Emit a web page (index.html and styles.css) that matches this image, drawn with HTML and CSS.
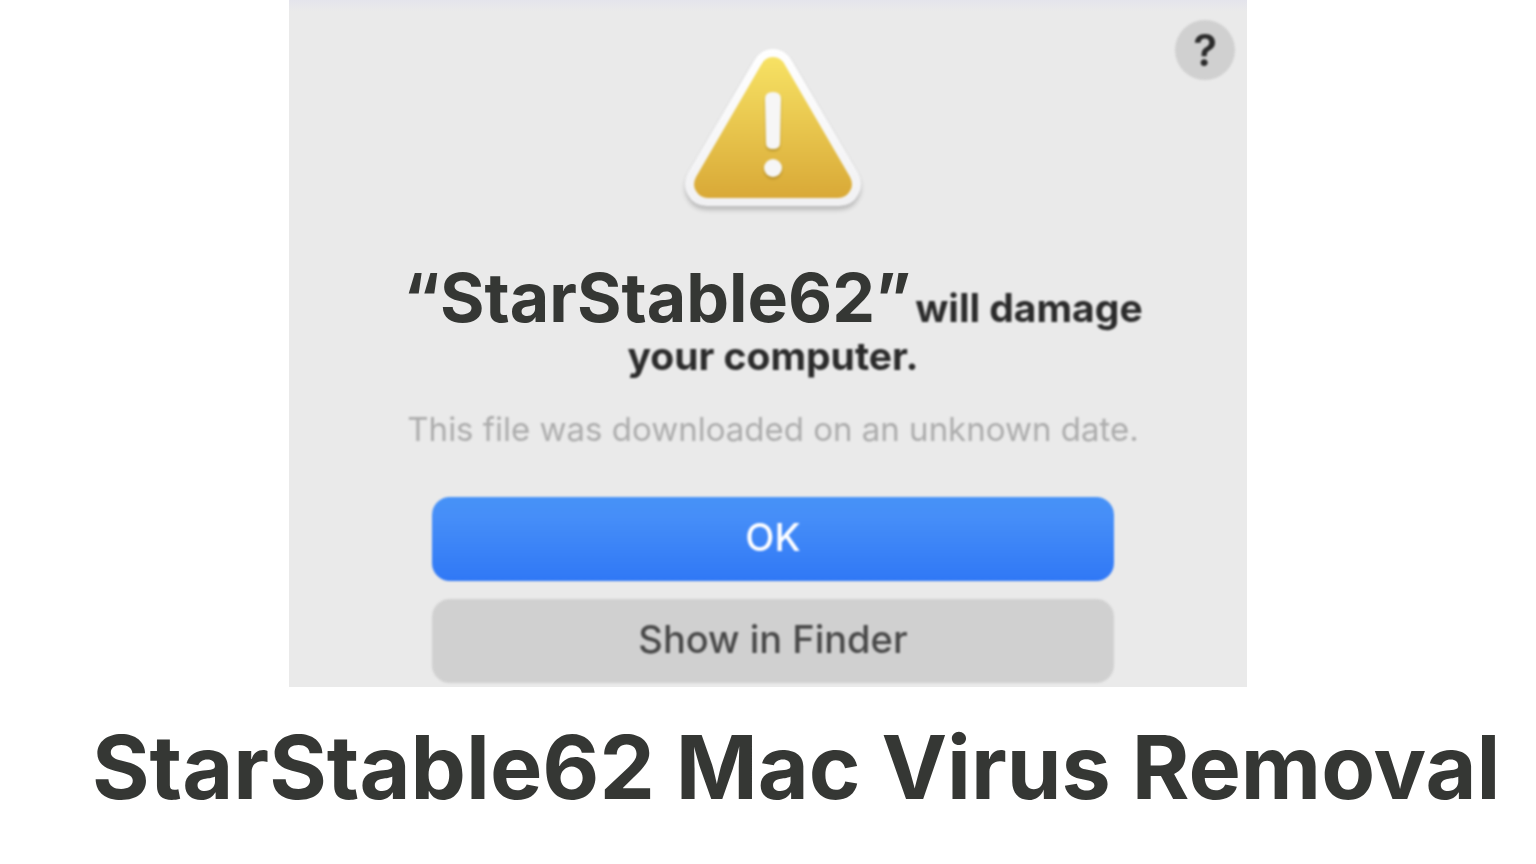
FILE: index.html
```html
<!DOCTYPE html>
<html lang="en">
<head>
  <meta charset="utf-8" />
  <meta name="viewport" content="width=device-width, initial-scale=1" />
  <title>StarStable62 Mac Virus Removal</title>
  <link rel="stylesheet" href="styles.css">
</head>
<body>
  <main class="page">
    <section class="dialog" aria-labelledby="alertTitle">
      <button class="help" type="button" aria-label="Help">?</button>

      <svg class="warning" viewBox="0 0 190 174" width="190" height="174" aria-hidden="true">
        <defs>
          <linearGradient id="gold" x1="0" y1="0" x2="0" y2="1">
            <stop offset="0" stop-color="#f7e264" />
            <stop offset="1" stop-color="#d9a937" />
          </linearGradient>
          <linearGradient id="rim" x1="0" y1="0" x2="0" y2="1">
            <stop offset="0" stop-color="#ffffff" />
            <stop offset="1" stop-color="#f1f1f3" />
          </linearGradient>
        </defs>
        <path class="rim" fill="url(#rim)" d="M76 16 Q83 4 95 4 Q107 4 114 16 L180 128 Q186 140 180 150 Q174 161 161 161 L29 161 Q16 161 10 150 Q4 140 10 128 Z" />
        <path fill="url(#gold)" d="M83 20 Q87 12 95 12 Q103 12 107 20 L172 132 Q176 140 172 146 Q168 153 160 153 L30 153 Q22 153 18 146 Q14 140 18 132 Z" />
        <g class="mark">
          <path d="M87 54 Q87 47 95 47 Q103 47 103 54 L102 98 Q102 104 95 104 Q88 104 88 98 Z" />
          <circle cx="95" cy="123" r="9" />
        </g>
      </svg>

      <h2 class="title" id="alertTitle">
        <span class="row"><span class="name">“StarStable62”</span> <span class="soft">will damage</span></span>
        <span class="row"><span class="soft">your computer.</span></span>
      </h2>
      <p class="info">This file was downloaded on an unknown date.</p>

      <div class="actions">
        <button class="btn primary" type="button">OK</button>
        <button class="btn" type="button">Show in Finder</button>
      </div>
    </section>

    <h1 class="headline">StarStable62 Mac Virus Removal</h1>
  </main>
</body>
</html>
```

FILE: styles.css
```css
:root{
  --panel: #eaeaea;
  --ink: #353734;
  --text: #2b2b2b;
  --muted: #acacac;
  --control: #d0d0d0;
}
*{ box-sizing: border-box; }
body{
  margin: 0;
  background: #fff;
  color: var(--ink);
  font-family: Inter, "Liberation Sans", sans-serif;
}
.page{ display:flex; flex-direction:column; align-items:center; }

.dialog{
  position: relative;
  width: 62.4%;
  padding: 45px 0 4px 10px;
  display:flex; flex-direction:column; align-items:center;
  background: linear-gradient(#e4e4ec, var(--panel) 12px);
}
.help{
  position:absolute; top: 20px; right: 12px;
  width: 60px; height: 60px; padding: 0;
  border: 0; border-radius: 50%;
  background: var(--control); color: var(--text);
  font: 600 44px/60px Inter, sans-serif;
  filter: blur(1px);
}
.warning{ display:block; filter: blur(1px); }
.rim{ filter: drop-shadow(0 4px 2px rgba(0,0,0,.2)); }
.mark{ fill: #f6f6f6; filter: drop-shadow(0 2px 1px rgba(120,90,10,.4)); }

.title{
  margin: 43px 0 0;
  white-space: nowrap;
  font-size: 39px; line-height: 48px; font-weight: 700;
}
.row{ display:flex; justify-content:center; align-items:baseline; gap: 4px; }
.name{ font-size: 68px; line-height: 70px; }
.soft{ color: var(--text); filter: blur(1px); }
.info{
  margin: 25px 0 0;
  color: var(--muted);
  font-size: 33px; line-height: 48px;
  white-space: nowrap;
  filter: blur(1px);
}

.actions{ width: 72%; margin-top: 44px; display:flex; flex-direction:column; gap: 18px; }
.btn{
  width: 100%; height: 84px; padding: 0 0 4px;
  border: 0; border-radius: 18px;
  background: var(--control); color: #484848;
  font: 500 38px/48px Inter, sans-serif;
  filter: blur(1px);
}
.btn.primary{ background: linear-gradient(#4692f7, #468ef8 24%, #3078f6); color: #fff; }

.headline{
  width: 100%; margin: 24px 0 0; padding: 0 44px 0 92px;
  font-size: 88px; line-height: 112px; font-weight: 700;
  white-space: nowrap;
}
```
